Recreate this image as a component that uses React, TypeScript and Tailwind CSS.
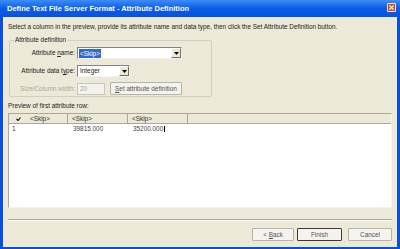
import React from 'react'

const font = "font-['Liberation_Sans',Arial,sans-serif]"

function Combo({ width, children }: { width: string; children: React.ReactNode }) {
  return (
    <div className={`${width} h-[12px] flex items-center bg-white border border-t-[#848284] border-l-[#848284] border-b-[#f4f3ee] border-r-[#f4f3ee]`}>
      <div className="flex-1 flex items-center pl-[1px]">{children}</div>
      <div className="w-[10px] h-[10px] flex items-center justify-center bg-[#ece9d8] border border-t-[#fff] border-l-[#fff] border-b-[#716f64] border-r-[#716f64]">
        <svg width="5" height="3" viewBox="0 0 5 3">
          <polygon points="0,0 5,0 2.5,3" fill="#000" />
        </svg>
      </div>
    </div>
  )
}

function Button({ width, label, isDefault }: { width: string; label: React.ReactNode; isDefault?: boolean }) {
  return (
    <div
      className={`${width} h-[13px] flex items-center justify-center rounded-[1px] bg-[#f4f3ee] text-[#555] border ${
        isDefault ? 'border-[#3a3a3a]' : 'border-[#b6b3a8]'
      }`}
    >
      {label}
    </div>
  )
}

export default function App() {
  return (
    <div className={`w-[400px] h-[249px] flex flex-col bg-[#0a4fdc] ${font} text-[6.4px] leading-[8px] text-[#222]`}>
      {/* title bar */}
      <div className="h-[17px] flex items-center justify-between pl-[7px] pr-[4px] bg-linear-to-b from-[#3d8cf5] via-[#0a5ce8] to-[#0553e0]">
        <span className="text-white font-bold text-[7.5px]">
          Define Text File Server Format - Attribute Definition
        </span>
        <div className="w-[9px] h-[9px] rounded-[1px] border border-white/80 bg-[#d9451f] flex items-center justify-center mb-[3px]">
          <svg width="5" height="5" viewBox="0 0 5 5">
            <path d="M0.5 0.5 L4.5 4.5 M4.5 0.5 L0.5 4.5" stroke="#fff" strokeWidth="1.2" />
          </svg>
        </div>
      </div>

      {/* body */}
      <div className="flex-1 mx-[3px] mb-[2px] bg-[#ece9d8] flex flex-col px-[5px]">
        <p className="mt-[6px] h-[8px] whitespace-nowrap">
          Select a column in the preview, provide its attribute name and data type, then click the Set Attribute Definition button.
        </p>

        {/* attribute definition group */}
        <div className="relative mt-[9px] ml-[1px] w-[203px] h-[57px] border border-[#d0d0bf] rounded-[2px] pt-[6px]">
          <span className="absolute -top-[5px] left-[4px] px-[1px] bg-[#ece9d8]">Attribute definition</span>

          <div className="flex items-center h-[12px]">
            <span className="w-[66px] text-right pr-[1px]">
              Attribute <span className="underline">n</span>ame:
            </span>
            <div className="ml-[1px]">
              <Combo width="w-[105px]">
                <span className="bg-[#316ac5] text-white px-[1px] leading-[9px]">&lt;Skip&gt;</span>
              </Combo>
            </div>
          </div>

          <div className="flex items-center h-[12px] mt-[6px]">
            <span className="w-[66px] text-right pr-[1px] whitespace-nowrap">
              Attribute data t<span className="underline">y</span>pe:
            </span>
            <div className="ml-[1px]">
              <Combo width="w-[53px]">
                <span className="pl-[1px]">Integer</span>
              </Combo>
            </div>
          </div>

          <div className="flex items-center h-[13px] mt-[5px]">
            <span className="w-[66px] text-right pr-[1px] text-[#aca899] whitespace-nowrap">Size/Column width:</span>
            <div className="ml-[1px] w-[28px] h-[12px] flex items-center pl-[2px] bg-[#f4f3ee] border border-[#c9c7ba] text-[#aca899]">
              20
            </div>
            <div className="ml-[5px]">
              <Button
                width="w-[72px]"
                label={
                  <span>
                    <span className="underline">S</span>et attribute definition
                  </span>
                }
              />
            </div>
          </div>
        </div>

        <p className="mt-[5px] h-[8px]">Preview of first attribute row:</p>

        {/* preview grid */}
        <div className="mt-[3px] h-[95px] bg-white border border-t-[#aca899] border-l-[#aca899] border-b-[#f4f3ee] border-r-[#f4f3ee] flex flex-col">
          <div className="h-[10px] flex bg-[#ece9d8] border-b border-[#aca899]">
            <div className="w-[59px] flex items-center border-r border-[#aca899]">
              <svg width="5" height="4" viewBox="0 0 5 4" className="ml-[7px]">
                <path d="M0.5 2 L2 3.5 L4.5 0.5" stroke="#000" strokeWidth="1.1" fill="none" />
              </svg>
              <span className="ml-[9px] text-[#333]">&lt;Skip&gt;</span>
            </div>
            <div className="w-[60px] flex items-center pl-[4px] border-r border-[#aca899] text-[#333]">&lt;Skip&gt;</div>
            <div className="w-[60px] flex items-center pl-[4px] border-r border-[#aca899] text-[#333]">&lt;Skip&gt;</div>
            <div className="flex-1" />
          </div>
          <div className="flex h-[9px] items-center text-[#444]">
            <div className="w-[59px] pl-[3px]">1</div>
            <div className="w-[60px] pl-[5px]">39815.000</div>
            <div className="w-[60px] pl-[5px] flex items-center">
              35200.000
              <span className="inline-block w-[1px] h-[6px] bg-black ml-[1px]" />
            </div>
          </div>
        </div>

        {/* separator */}
        <div className="mt-[11px] h-[2px] border-t border-[#aca899] border-b border-b-white" />

        {/* buttons */}
        <div className="mt-[7px] flex justify-end">
          <Button
            width="w-[42px]"
            label={
              <span>
                &lt; <span className="underline">B</span>ack
              </span>
            }
          />
          <div className="ml-[3px]">
            <Button width="w-[45px]" label="Finish" isDefault />
          </div>
          <div className="ml-[6px]">
            <Button width="w-[44px]" label="Cancel" />
          </div>
        </div>
      </div>
    </div>
  )
}
